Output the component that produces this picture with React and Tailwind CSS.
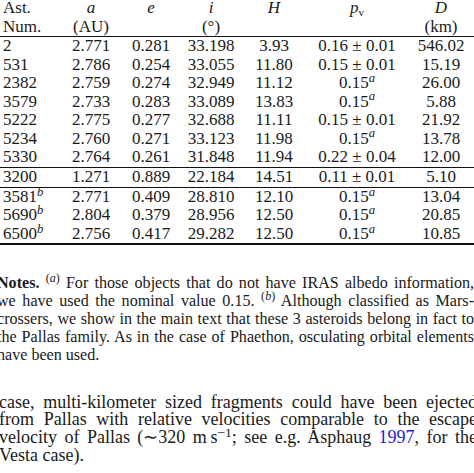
import React from "react";

const serif = { fontFamily: '"Liberation Serif", "Times New Roman", serif' };

const groups = [
  [
    ["2", "2.771", "0.281", "33.198", "3.93", "0.16 ± 0.01", "546.02"],
    ["531", "2.786", "0.254", "33.055", "11.80", "0.15 ± 0.01", "15.19"],
    ["2382", "2.759", "0.274", "32.949", "11.12", "a", "26.00"],
    ["3579", "2.733", "0.283", "33.089", "13.83", "a", "5.88"],
    ["5222", "2.775", "0.277", "32.688", "11.11", "0.15 ± 0.01", "21.92"],
    ["5234", "2.760", "0.271", "33.123", "11.98", "a", "13.78"],
    ["5330", "2.764", "0.261", "31.848", "11.94", "0.22 ± 0.04", "12.00"],
  ],
  [["3200", "1.271", "0.889", "22.184", "14.51", "0.11 ± 0.01", "5.10"]],
  [
    ["3581b", "2.771", "0.409", "28.810", "12.10", "a", "13.04"],
    ["5690b", "2.804", "0.379", "28.956", "12.50", "a", "20.85"],
    ["6500b", "2.756", "0.417", "29.282", "12.50", "a", "10.85"],
  ],
];

const cols = "grid grid-cols-[62px_58px_62px_58px_68px_98px_70px] h-[18.5px] leading-[18.5px] items-center";

function Row({ r }) {
  const ast = r[0].endsWith("b") ? (
    <>
      {r[0].slice(0, -1)}
      <sup className="italic">b</sup>
    </>
  ) : (
    r[0]
  );
  const pv = r[5] === "a" ? (
    <>
      0.15<sup className="italic">a</sup>
    </>
  ) : (
    r[5]
  );
  return (
    <div className={cols}>
      <div className="pl-[3px]">{ast}</div>
      <div className="text-center">{r[1]}</div>
      <div className="text-center">{r[2]}</div>
      <div className="text-center">{r[3]}</div>
      <div className="text-center">{r[4]}</div>
      <div className="text-center">{pv}</div>
      <div className="text-center">{r[6]}</div>
    </div>
  );
}

function Rule() {
  return <div className="h-[1.3px] bg-[#111]" />;
}

function J({ children, last }) {
  return <div className={last ? "" : "text-justify [text-align-last:justify]"}>{children}</div>;
}

export default function App() {
  return (
    <div className="w-[474px] h-[473px] overflow-hidden bg-white text-[#1a1a1a]" style={serif}>
      <div className="-mt-[1px] w-[476px] text-[17px]">
        <div className={cols}>
          <div className="pl-[3px]">Ast.</div>
          <div className="text-center italic">a</div>
          <div className="text-center italic">e</div>
          <div className="text-center italic">i</div>
          <div className="text-center italic">H</div>
          <div className="text-center">
            <i>p</i>
            <sub className="text-[11px]">v</sub>
          </div>
          <div className="text-center italic">D</div>
        </div>
        <div className={cols}>
          <div className="pl-[3px]">Num.</div>
          <div className="text-center">(AU)</div>
          <div />
          <div className="text-center">(°)</div>
          <div />
          <div />
          <div className="text-center">(km)</div>
        </div>
        <Rule />
        {groups.map((g, gi) => (
          <React.Fragment key={gi}>
            {g.map((r) => (
              <Row key={r[0]} r={r} />
            ))}
            <Rule />
          </React.Fragment>
        ))}
      </div>

      <div className="mt-[29px] -ml-[3px] w-[477px] text-[16.1px] leading-[18px]">
        <J>
          <b>Notes.</b> <sup>(<i>a</i>)</sup> For those objects that do not have IRAS albedo information,
        </J>
        <J>
          we have used the nominal value 0.15. <sup>(<i>b</i>)</sup> Although classified as Mars-
        </J>
        <J>crossers, we show in the main text that these 3 asteroids belong in fact to</J>
        <J>the Pallas family. As in the case of Phaethon, osculating orbital elements</J>
        <J last>have been used.</J>
      </div>

      <div className="mt-[30px] -ml-[1px] w-[478px] text-[18px] leading-[17.8px]">
        <J>case, multi-kilometer sized fragments could have been ejected</J>
        <J>from Pallas with relative velocities comparable to the escape</J>
        <J>
          velocity of Pallas (∼320 m{"\u2009"}s<sup>−1</sup>; see e.g. Asphaug{" "}
          <span className="text-[#2323d6]">1997</span>, for the
        </J>
        <J last>Vesta case).</J>
      </div>
    </div>
  );
}
